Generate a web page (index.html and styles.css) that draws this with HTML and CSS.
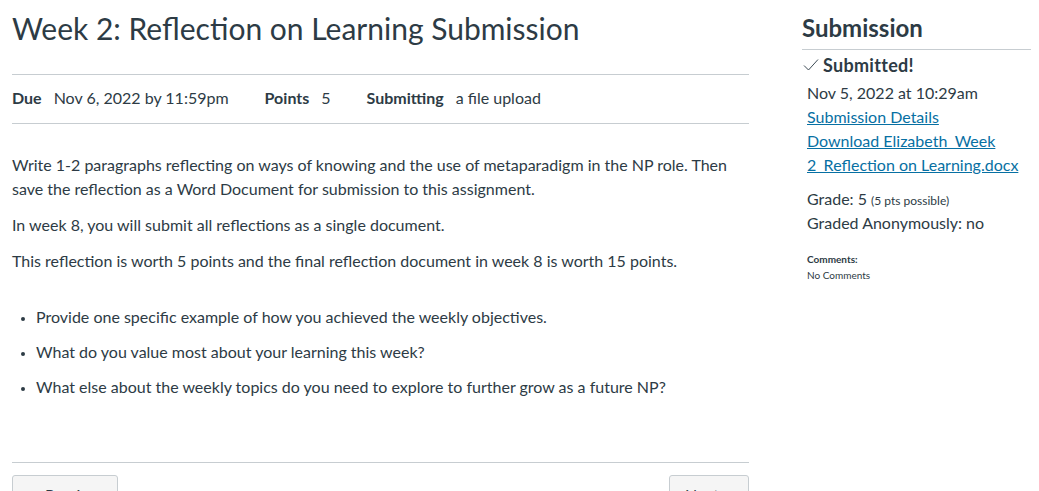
FILE: index.html
```html
<!DOCTYPE html>
<html>
<head>
<meta charset="utf-8">
<link rel="stylesheet" href="styles.css">
</head>
<body>
<div class="page">
  <main class="main">
    <h1 class="title">Week 2: Reflection on Learning Submission</h1>
    <div class="details">
      <span class="item"><span class="label">Due</span><span class="value">Nov 6, 2022 by 11:59pm</span></span>
      <span class="item"><span class="label">Points</span><span class="value">5</span></span>
      <span class="item"><span class="label">Submitting</span><span class="value">a file upload</span></span>
    </div>
    <div class="description">
      <p>Write 1-2 paragraphs reflecting on ways of knowing and the use of metaparadigm in the NP role. Then save the reflection as a Word Document for submission to this assignment.</p>
      <p>In week 8, you will submit all reflections as a single document.</p>
      <p>This reflection is worth 5 points and the final reflection document in week 8 is worth 15 points.</p>
      <ul class="list">
        <li>Provide one specific example of how you achieved the weekly objectives.</li>
        <li>What do you value most about your learning this week?</li>
        <li>What else about the weekly topics do you need to explore to further grow as a future NP?</li>
      </ul>
    </div>
    <div class="footer">
      <button class="btn btn-prev"><span class="arrow">◂</span>Previous</button>
      <button class="btn btn-next">Next<span class="arrow">▸</span></button>
    </div>
  </main>
  <aside class="side">
    <h2 class="side-title">Submission</h2>
    <div class="submitted">
      <svg class="check" width="16" height="14" viewBox="0 0 16 14"><path d="M1 7.5 L5.5 12 L15 1.5" fill="none" stroke="#3d4b55" stroke-width="1"/></svg>
      <span>Submitted!</span>
    </div>
    <div class="side-body">
      <div class="line">Nov 5, 2022 at 10:29am</div>
      <a class="link" href="#">Submission Details</a>
      <a class="link" href="#">Download Elizabeth_Week 2_Reflection on Learning.docx</a>
      <div class="grade">Grade: 5 <span class="small">(5 pts possible)</span></div>
      <div class="line anon">Graded Anonymously: no</div>
      <div class="comments-label">Comments:</div>
      <div class="comments">No Comments</div>
    </div>
  </aside>
</div>
</body>
</html>
```
FILE: styles.css
```css
* { box-sizing: border-box; }
body {
  margin: 0;
  font-family: Lato, "Liberation Sans", sans-serif;
  color: #2d3b45;
  background: #fff;
  overflow: hidden;
}
.page {
  display: flex;
  padding: 0 8px 0 12px;
  gap: 53px;
}
.main { width: 737px; flex: none; }
.title {
  margin: 0;
  font-size: 30px;
  font-weight: 400;
  line-height: 38px;
  padding-top: 9px;
  height: 74px;
}
.details {
  border-top: 1px solid #c7cdd1;
  border-bottom: 1px solid #c7cdd1;
  height: 50px;
  display: flex;
  align-items: center;
  font-size: 16px;
  gap: 36px;
  padding-bottom: 3px;
}
.label { font-weight: 700; margin-right: 12px; }
.description {
  padding-top: 29px;
  font-size: 16px;
  line-height: 24px;
}
.description p { margin: 0 0 12px; }
.list {
  margin: 32px 0 0;
  padding-left: 24px;
}
.list li { margin-bottom: 11px; }
.list li::marker { font-size: 12px; }
.footer {
  margin-top: 63px;
  border-top: 1px solid #c7cdd1;
  padding-top: 12px;
  display: flex;
  justify-content: space-between;
}
.btn {
  font-family: inherit;
  font-size: 16px;
  color: #2d3b45;
  background: #f5f5f5;
  border: 1px solid #c7cdd1;
  border-radius: 3px;
  height: 38px;
  white-space: nowrap;
  display: flex;
  align-items: center;
}
.btn-prev { width: 106px; padding: 0 0 0 15px; }
.btn-prev .arrow { margin-right: 11px; }
.btn-next { width: 80px; padding: 0 0 0 15px; }
.btn-next .arrow { margin-left: 14px; }
.arrow { font-size: 12px; }
.side { width: 229px; flex: none; }
.side-title {
  margin: 0;
  font-size: 24px;
  font-weight: 700;
  line-height: 30px;
  padding-top: 13px;
  height: 50px;
  border-bottom: 1px solid #c7cdd1;
}
.submitted {
  display: flex;
  align-items: center;
  gap: 4px;
  font-size: 18px;
  font-weight: 700;
  height: 28px;
  margin-top: 1px;
  padding-left: 1px;
  letter-spacing: 0.3px;
}
.side-body {
  padding-left: 5px;
  padding-top: 2px;
  font-size: 16px;
  line-height: 24px;
}
.link { display: block; color: #0770a3; text-decoration: underline; }
.grade { margin-top: 10px; line-height: 23px; }
.anon { line-height: 22px; }
.small { font-size: 12px; }
.comments-label { font-size: 10px; font-weight: 700; line-height: 16px; margin-top: 17px; }
.comments { font-size: 10px; line-height: 16px; }
```
